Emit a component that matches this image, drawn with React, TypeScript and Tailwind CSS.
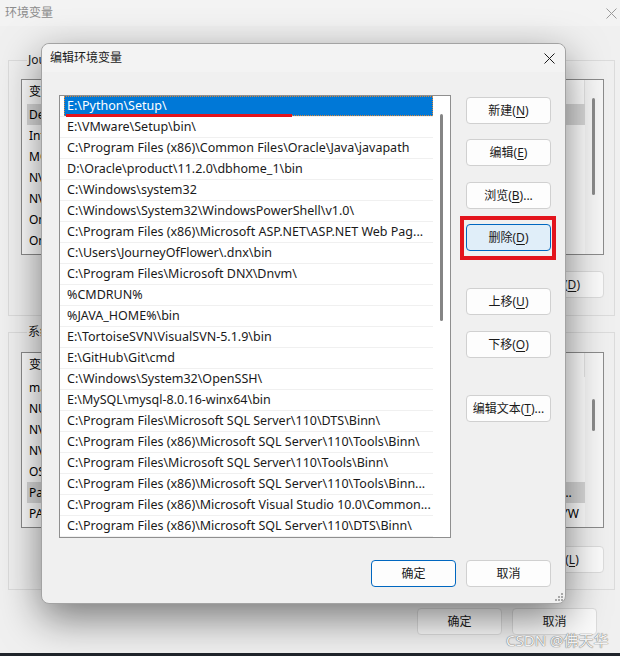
import React from "react";

type EnvVar = {
    name: string;
    value: string;
    alignEnd?: boolean;
};

const paths = [
    "E:\\Python\\Setup\\",
    "E:\\VMware\\Setup\\bin\\",
    "C:\\Program Files (x86)\\Common Files\\Oracle\\Java\\javapath",
    "D:\\Oracle\\product\\11.2.0\\dbhome_1\\bin",
    "C:\\Windows\\system32",
    "C:\\Windows\\System32\\WindowsPowerShell\\v1.0\\",
    "C:\\Program Files (x86)\\Microsoft ASP.NET\\ASP.NET Web Pag...",
    "C:\\Users\\JourneyOfFlower\\.dnx\\bin",
    "C:\\Program Files\\Microsoft DNX\\Dnvm\\",
    "%CMDRUN%",
    "%JAVA_HOME%\\bin",
    "E:\\TortoiseSVN\\VisualSVN-5.1.9\\bin",
    "E:\\GitHub\\Git\\cmd",
    "C:\\Windows\\System32\\OpenSSH\\",
    "E:\\MySQL\\mysql-8.0.16-winx64\\bin",
    "C:\\Program Files\\Microsoft SQL Server\\110\\DTS\\Binn\\",
    "C:\\Program Files (x86)\\Microsoft SQL Server\\110\\Tools\\Binn\\",
    "C:\\Program Files\\Microsoft SQL Server\\110\\Tools\\Binn\\",
    "C:\\Program Files (x86)\\Microsoft SQL Server\\110\\Tools\\Binn...",
    "C:\\Program Files (x86)\\Microsoft Visual Studio 10.0\\Common...",
    "C:\\Program Files (x86)\\Microsoft SQL Server\\110\\DTS\\Binn\\",
];

const userVars: EnvVar[] = [
    { name: "DevEco Studio", value: "E:\\Huawei\\DevEco Studio\\bin;" },
    { name: "IntelliJ IDEA", value: "E:\\JetBrains\\IntelliJ IDEA\\bin;" },
    { name: "MOZ_PLUGIN_PATH", value: "E:\\Foxit Reader\\plugins\\" },
    { name: "NVM_HOME", value: "E:\\nvm" },
    { name: "NVM_SYMLINK", value: "E:\\nodejs" },
    { name: "OneDrive", value: "C:\\Users\\JourneyOfFlower\\OneDrive" },
    { name: "OneDriveConsumer", value: "C:\\Users\\JourneyOfFlower\\OneDrive" },
];

const systemVars: EnvVar[] = [
    { name: "maven", value: "E:\\apache-maven-3.6.1" },
    { name: "NUMBER_OF_PROCESSORS", value: "16" },
    { name: "NVM_HOME", value: "E:\\nvm" },
    { name: "NVM_SYMLINK", value: "E:\\nodejs" },
    { name: "OS", value: "Windows_NT" },
    {
        name: "Path",
        value: "E:\\Python\\Setup\\;E:\\VMware\\Setup\\bin\\;C:\\Program Files (x86)\\Common Files\\Oracle\\Java\\javapath;D:\\Oracle\\product\\11.2.0\\dbhome_1\\bin;C:\\Windows\\system32",
    },
    { name: "PATHEXT", value: ".COM;.EXE;.BAT;.CMD;.VBS;.VBE;.JS;.JSE;.WSF;.WSH;.MSC;.PYW", alignEnd: true },
];

const Key = ({ k }: { k: string }) => (
    <span className="underline underline-offset-[2px]">{k}</span>
);

const CloseIcon = ({ color }: { color: string }) => (
    <svg width="11" height="11" viewBox="0 0 11 11" fill="none">
        <path d="M0.5 0.5L10.5 10.5M10.5 0.5L0.5 10.5" stroke={color} strokeWidth="1" />
    </svg>
);

// list in the window behind the dialog
const BgList = ({
    rows,
    selected,
    thumbTop,
    thumbHeight,
}: {
    rows: EnvVar[];
    selected: number;
    thumbTop: number;
    thumbHeight: number;
}) => (
    <div className="flex h-[176px] border border-[#8c8c8c] bg-white">
        <div className="min-w-0 flex-1 overflow-hidden">
            <div className="flex h-[24px] items-center border-r border-[#e5e5e5] pl-[7px]">
                <span className="w-[190px]">变量</span>
                <span>值</span>
            </div>
            {rows.map((row, i) => (
                <div
                    key={row.name}
                    className={`ml-[5px] flex h-[21px] items-center pl-[2px] ${
                        i === selected ? "bg-[#dadada]" : ""
                    }`}
                >
                    <span className="w-[188px] shrink-0 truncate">{row.name}</span>
                    {row.alignEnd ? (
                        <span className="flex min-w-0 flex-1 justify-end overflow-hidden whitespace-nowrap pr-[6px]">
                            {row.value}
                        </span>
                    ) : (
                        <span className="min-w-0 flex-1 truncate pr-[13px]">{row.value}</span>
                    )}
                </div>
            ))}
        </div>
        <div className="relative w-[18px] shrink-0 bg-[#f7f7f7]">
            <div
                className="absolute left-[7px] w-[3px] rounded-full bg-[#8a8a8a]"
                style={{ top: thumbTop, height: thumbHeight }}
            />
        </div>
    </div>
);

const BgButton = ({ children, wide }: { children: React.ReactNode; wide?: boolean }) => (
    <button
        type="button"
        className={`h-[27px] rounded-[4px] border border-[#dcdcdc] bg-[#fbfbfb] text-[12px] text-[#1a1a1a] ${
            wide ? "w-[88px]" : "w-[85px]"
        }`}
    >
        {children}
    </button>
);

const DlgButton = ({
    children,
    primary,
    className = "",
}: {
    children: React.ReactNode;
    primary?: boolean;
    className?: string;
}) => (
    <button
        type="button"
        className={`h-[27px] w-[85px] rounded-[4px] border text-[12px] text-[#1a1a1a] ${
            primary ? "border-[#0067c0] bg-[#fdfdfd]" : "border-[#d0d0d0] bg-[#fdfdfd]"
        } ${className}`}
    >
        {children}
    </button>
);

export default function App() {
    return (
        <div className="relative h-[656px] w-[620px] overflow-hidden bg-[#f0f0f0] font-['Noto_Sans','Noto_Sans_CJK_SC',sans-serif] text-[12px] text-black">
            {/* background window: 环境变量 */}
            <div className="flex h-full flex-col">
                <div className="flex h-[26px] shrink-0 items-center justify-between bg-[#f3f3f3] pl-[5px] pr-[3px] text-[#8c8c8c]">
                    <span>环境变量</span>
                    <CloseIcon color="#9a9a9a" />
                </div>
                <div className="flex flex-1 flex-col pl-[8px] pr-[5px]">
                    <fieldset className="mt-[26px] border border-[#dcdcdc] pb-[17px] pl-[12px] pr-[10px]">
                        <legend className="ml-[6px] px-[1px] leading-[16px] text-[#1a1a1a]">
                            JourneyOfFlower 的用户变量
                        </legend>
                        <div className="mt-[11px]">
                            <BgList rows={userVars} selected={0} thumbTop={18} thumbHeight={97} />
                        </div>
                        <div className="mt-[16px] flex justify-end gap-[10px]">
                            <BgButton>新建(<Key k="N" />)...</BgButton>
                            <BgButton>编辑(<Key k="E" />)...</BgButton>
                            <BgButton wide>删除(<Key k="D" />)</BgButton>
                        </div>
                    </fieldset>
                    <fieldset className="mt-[8px] min-w-0 border border-[#dcdcdc] pb-[16px] pl-[12px] pr-[10px]">
                        <legend className="ml-[6px] px-[1px] leading-[16px] text-[#1a1a1a]">
                            系统变量(<Key k="S" />)
                        </legend>
                        <div className="mt-[12px]">
                            <BgList rows={systemVars} selected={5} thumbTop={46} thumbHeight={32} />
                        </div>
                        <div className="mt-[18px] flex justify-end gap-[10px]">
                            <BgButton>新建(<Key k="W" />)...</BgButton>
                            <BgButton>编辑(<Key k="I" />)...</BgButton>
                            <BgButton wide>删除(<Key k="L" />)</BgButton>
                        </div>
                    </fieldset>
                    <div className="mt-[18px] flex justify-end gap-[10px] pr-[18px]">
                        <BgButton>确定</BgButton>
                        <BgButton>取消</BgButton>
                    </div>
                </div>
                <div className="h-[3px] shrink-0 bg-[#20252b]" />
            </div>

            {/* dialog: 编辑环境变量 */}
            <div className="absolute left-[41px] top-[43px] flex h-[561px] w-[525px] flex-col rounded-[8px] border border-[#a3a3a3] bg-[#f0f0f0] shadow-[0_14px_40px_rgba(0,0,0,0.5)]">
                <div className="flex h-[28px] shrink-0 items-center justify-between rounded-t-[8px] bg-[#f3f3f3] pl-[8px] pr-[10px]">
                    <span className="text-[#1a1a1a]">编辑环境变量</span>
                    <CloseIcon color="#1a1a1a" />
                </div>

                <div className="mt-[23px] flex pl-[17px]">
                    <div className="flex h-[443px] w-[392px] border border-[#8f8f8f] bg-white">
                        <div className="flex-1 overflow-hidden text-[12.5px]">
                            {paths.map((p, i) => (
                                <div
                                    key={p}
                                    className="relative h-[21px] shrink-0 border-b border-[#f0f0f0]"
                                >
                                    {i === 0 ? (
                                        <div className="ml-[4px] flex h-full items-center border border-dotted border-[#d8883a] bg-[#0078d7] pl-[2px] text-white">
                                            {p}
                                            <span className="absolute left-[6px] top-[18px] h-[3px] w-[226px] bg-[#e3141c]" />
                                        </div>
                                    ) : (
                                        <div className="flex h-full items-center whitespace-nowrap pl-[7px] text-[#1a1a1a]">
                                            {p}
                                        </div>
                                    )}
                                </div>
                            ))}
                        </div>
                        <div className="relative w-[17px] bg-white">
                            <div className="absolute left-[7px] top-[18px] h-[207px] w-[3px] rounded-full bg-[#858585]" />
                        </div>
                    </div>

                    <div className="ml-[15px] flex flex-col">
                        <DlgButton className="mt-[2px]">新建(<Key k="N" />)</DlgButton>
                        <DlgButton className="mt-[15px]">编辑(<Key k="E" />)</DlgButton>
                        <DlgButton className="mt-[16px]">浏览(<Key k="B" />)...</DlgButton>
                        <div className="relative mt-[15px]">
                            <button
                                type="button"
                                className="h-[27px] w-[85px] rounded-[4px] border border-[#0067c0] bg-[#e0eef9] text-[12px] text-[#1a1a1a]"
                            >
                                删除(<Key k="D" />)
                            </button>
                            <span className="absolute -bottom-[9px] -left-[6px] -right-[5px] -top-[8px] border-[4px] border-[#e3141c]" />
                        </div>
                        <DlgButton className="mt-[37px]">上移(<Key k="U" />)</DlgButton>
                        <DlgButton className="mt-[16px]">下移(<Key k="O" />)</DlgButton>
                        <DlgButton className="mt-[37px]">编辑文本(<Key k="T" />)...</DlgButton>
                    </div>
                </div>

                <div className="mt-[22px] flex justify-end gap-[10px] pr-[14px]">
                    <DlgButton primary>确定</DlgButton>
                    <DlgButton>取消</DlgButton>
                </div>

                <svg
                    className="absolute bottom-[2px] right-[2px]"
                    width="9"
                    height="9"
                    viewBox="0 0 9 9"
                    fill="#a8a8a8"
                >
                    <rect x="7" y="1" width="2" height="2" />
                    <rect x="4" y="4" width="2" height="2" />
                    <rect x="7" y="4" width="2" height="2" />
                    <rect x="1" y="7" width="2" height="2" />
                    <rect x="4" y="7" width="2" height="2" />
                    <rect x="7" y="7" width="2" height="2" />
                </svg>
            </div>

            <span className="absolute left-[506px] top-[629px] text-[15px] text-[#f2f2f2] [text-shadow:0_0_1px_#6e6e6e,0_0_1px_#6e6e6e]">
                CSDN @佛天华
            </span>
        </div>
    );
}
